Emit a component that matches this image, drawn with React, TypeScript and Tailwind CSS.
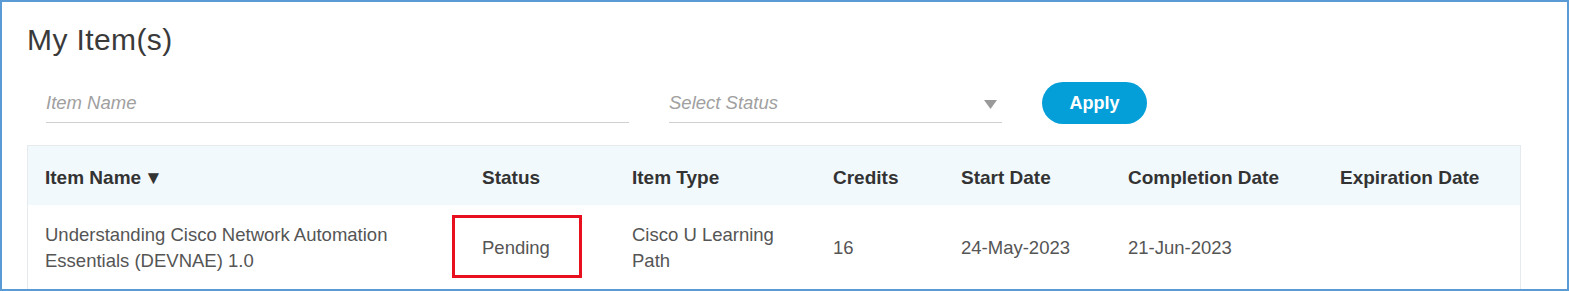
import React from "react";

const columns = [
  "Item Name",
  "Status",
  "Item Type",
  "Credits",
  "Start Date",
  "Completion Date",
  "Expiration Date",
];

const grid = "grid grid-cols-[437px_150px_201px_128px_167px_212px_197px]";

export default function App() {
  return (
    <div className="w-[1569px] h-[291px] overflow-hidden bg-white border-2 border-[#5b9bd5] font-['Liberation_Sans',Arial,sans-serif]">
      <div className="pl-[25px] pt-[20px]">
        {/* Title */}
        <h1 className="text-[30px] leading-[36px] font-light text-[#3a3a3a] tracking-[0.4px]">My Item(s)</h1>

        {/* Filters */}
        <div className="flex items-start mt-[25px] pl-[19px]">
          <div className="w-[583px] h-[40px] border-b border-[#cfcfcf] flex items-center">
            <span className="text-[18.5px] italic text-[#a0a0a0]">Item Name</span>
          </div>
          <div className="w-[333px] h-[40px] ml-[40px] border-b border-[#cfcfcf] flex items-center justify-between pr-[5px]">
            <span className="text-[18.5px] italic text-[#a0a0a0]">Select Status</span>
            <svg width="13" height="9" viewBox="0 0 13 9" className="mt-[3px]">
              <path d="M0 0h13L6.5 9z" fill="#9a9a9a" />
            </svg>
          </div>
          <button className="ml-[40px] -mt-[1px] w-[105px] h-[42px] rounded-full bg-[#049fd9] text-white text-[18px] font-bold">
            Apply
          </button>
        </div>

        {/* Table */}
        <div className="mt-[21px] w-[1494px] border border-[#e6eaec]">
          <div className={`${grid} h-[59px] pt-[5px] bg-[#f1f9fd] items-center`}>
            {columns.map((c, i) => (
              <div key={c} className="pl-[17px] text-[19px] font-bold text-[#333]">
                {c}
                {i === 0 && <span className="ml-[3px] text-[19px]">▼</span>}
              </div>
            ))}
          </div>
          <div className={`${grid} pt-[17px] pb-[16px] text-[18.5px] leading-[26px] text-[#555] items-center`}>
            <div className="pl-[17px] pr-[17px]">Understanding Cisco Network Automation Essentials (DEVNAE) 1.0</div>
            <div className="pl-[17px] relative">
              Pending
              <span className="absolute left-[-13px] top-[-20px] w-[130px] h-[63px] border-[3px] border-[#e8101e]" />
            </div>
            <div className="pl-[17px] pr-[17px]">Cisco U Learning Path</div>
            <div className="pl-[17px]">16</div>
            <div className="pl-[17px]">24-May-2023</div>
            <div className="pl-[17px]">21-Jun-2023</div>
            <div className="pl-[17px]"></div>
          </div>
        </div>
      </div>
    </div>
  );
}
